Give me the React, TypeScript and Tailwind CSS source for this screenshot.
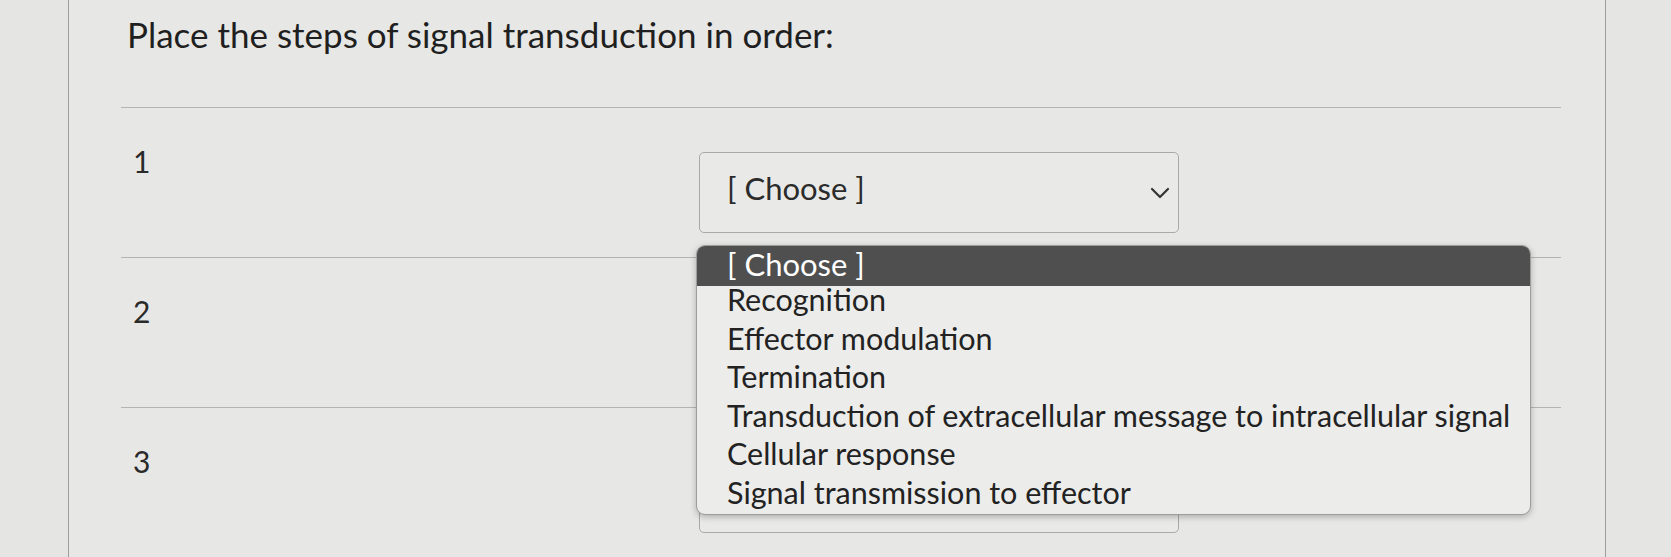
import { ChevronDown } from "lucide-react";

const options = [
  "Recognition",
  "Effector modulation",
  "Termination",
  "Transduction of extracellular message to intracellular signal",
  "Cellular response",
  "Signal transmission to effector",
];

function Select() {
  return (
    <div className="w-[480px] h-[81px] rounded-[5px] border border-[#a9a9a7] bg-[#e9e9e7] flex items-center justify-between pl-[27px] pr-[2px]">
      <span className="text-[31px] leading-[32px] text-[#2b2b2b] -mt-[10px]">[ Choose ]</span>
      <ChevronDown className="w-[32px] h-[32px] text-[#333]" strokeWidth={1.6} />
    </div>
  );
}

function Row({ n, open }: { n: number; open?: boolean }) {
  return (
    <div className="relative h-[150px] border-b border-[#b4b4b2] flex pt-[44px]">
      <div className="w-[578px] pl-[12px] text-[30px] leading-[30px] text-[#2a2a2a] -mt-[6px]">{n}</div>
      <Select />
      {open && (
        <div className="absolute z-10 left-[575px] top-[137px] w-[835px] h-[270px] rounded-[9px] border border-[#9d9d9b] bg-[#ececea] shadow-[0_2px_6px_rgba(0,0,0,0.25)] overflow-hidden">
          <div className="h-[40px] bg-[#4f4f4f] pl-[30px] text-[31px] leading-[37px] text-white">[ Choose ]</div>
          <ul className="pl-[30px] -mt-[2px]">
            {options.map((o) => (
              <li key={o} className="h-[38.6px] text-[30.5px] leading-[31px] text-[#222]">
                {o}
              </li>
            ))}
          </ul>
        </div>
      )}
    </div>
  );
}

export default function App() {
  return (
    <div className="w-[1671px] h-[557px] overflow-hidden bg-[#e5e5e3] font-['Lato','Open_Sans',sans-serif]">
      <div className="ml-[68px] w-[1538px] h-full border-x border-[#9e9e9c] bg-[#e7e7e5]">
        <div className="ml-[52px] w-[1440px]">
          <div className="h-[108px] border-b border-[#b4b4b2] pl-[6px] pt-[8px]">
            <h1 className="text-[35px] text-[#1f1f1f]">Place the steps of signal transduction in order:</h1>
          </div>
          <Row n={1} open />
          <Row n={2} />
          <Row n={3} />
        </div>
      </div>
    </div>
  );
}
